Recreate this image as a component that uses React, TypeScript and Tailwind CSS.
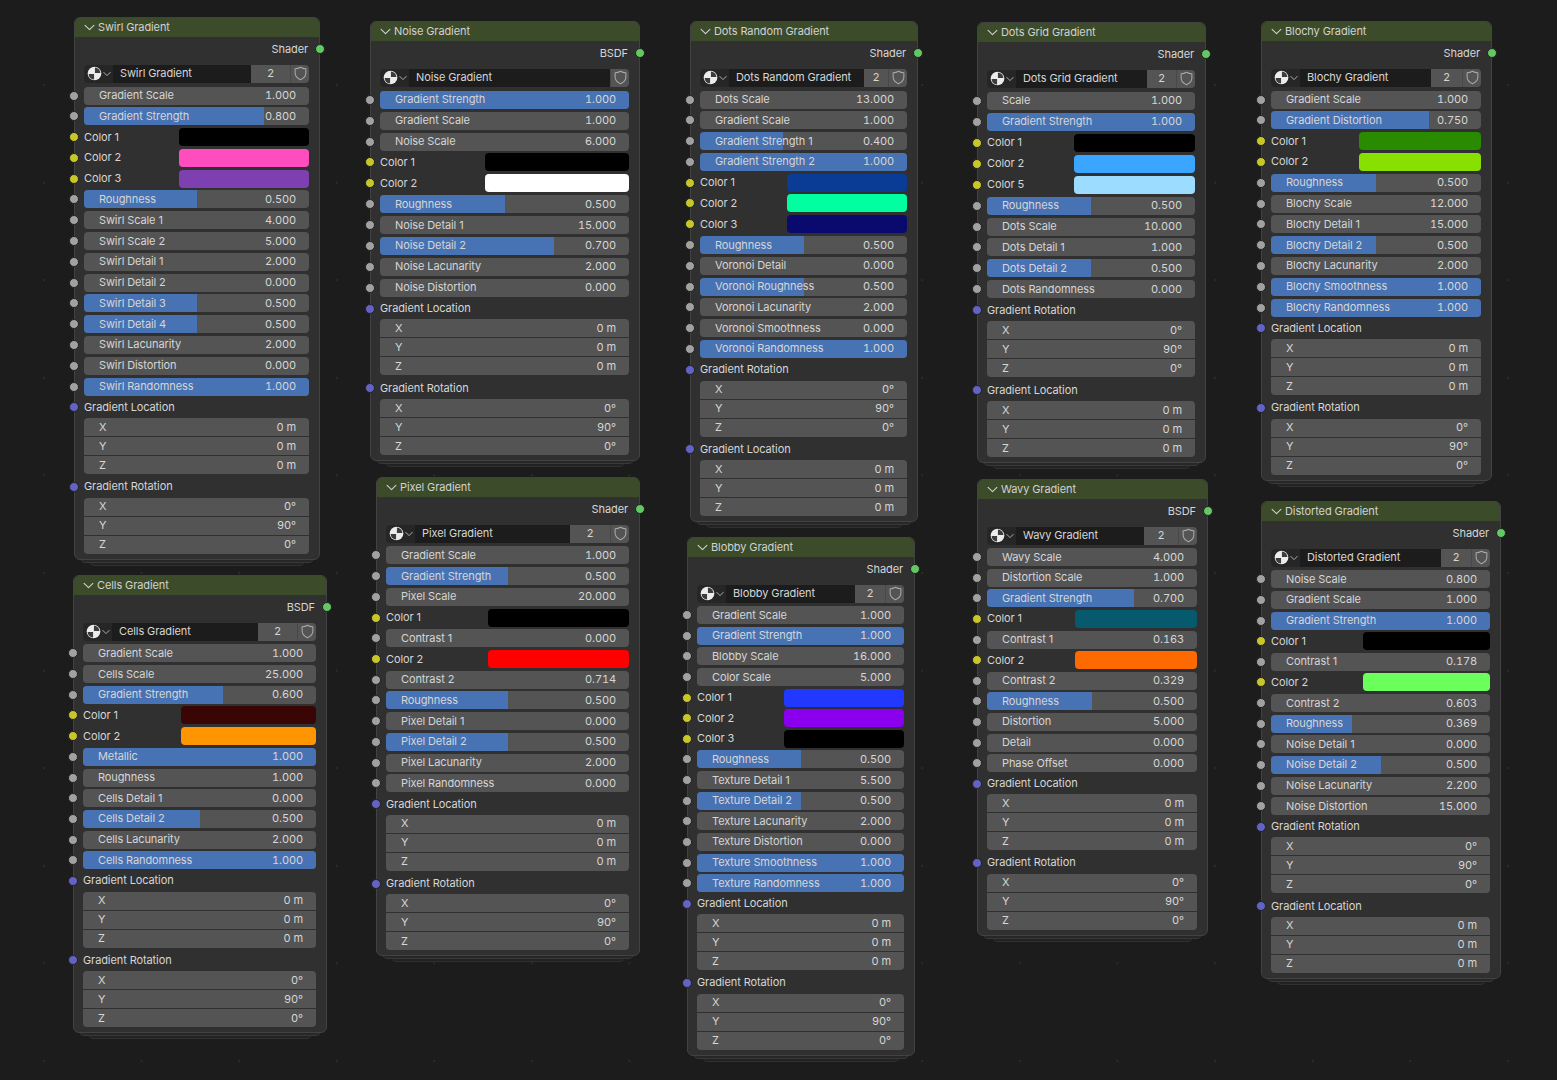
type Row = [string, string, number?] | [string, "color", string] | [string, "vec", string, string, string];

type NodeData = {
  title: string;
  output: string;
  x: number;
  y: number;
  w: number;
  pitch: number; // row to row distance differs a little per node
  numW?: number; // no width means no user count
  rows: Row[];
};

const LOC: Row = ["Gradient Location", "vec", "0 m", "0 m", "0 m"];
const ROT: Row = ["Gradient Rotation", "vec", "0°", "90°", "0°"];

const nodes: NodeData[] = [
  {
    title: "Swirl Gradient", output: "Shader", x: 74, y: 17, w: 246, pitch: 20.79, numW: 39,
    rows: [
      ["Gradient Scale", "1.000"],
      ["Gradient Strength", "0.800", 0.8],
      ["Color 1", "color", "#000000"],
      ["Color 2", "color", "#ff4dbd"],
      ["Color 3", "color", "#7e3fb0"],
      ["Roughness", "0.500", 0.5],
      ["Swirl Scale 1", "4.000"],
      ["Swirl Scale 2", "5.000"],
      ["Swirl Detail 1", "2.000"],
      ["Swirl Detail 2", "0.000"],
      ["Swirl Detail 3", "0.500", 0.5],
      ["Swirl Detail 4", "0.500", 0.5],
      ["Swirl Lacunarity", "2.000"],
      ["Swirl Distortion", "0.000"],
      ["Swirl Randomness", "1.000", 1],
      LOC, ROT,
    ],
  },
  {
    title: "Noise Gradient", output: "BSDF", x: 370, y: 21, w: 270, pitch: 20.89,
    rows: [
      ["Gradient Strength", "1.000", 1],
      ["Gradient Scale", "1.000"],
      ["Noise Scale", "6.000"],
      ["Color 1", "color", "#000000"],
      ["Color 2", "color", "#ffffff"],
      ["Roughness", "0.500", 0.5],
      ["Noise Detail 1", "15.000"],
      ["Noise Detail 2", "0.700", 0.7],
      ["Noise Lacunarity", "2.000"],
      ["Noise Distortion", "0.000"],
      LOC, ROT,
    ],
  },
  {
    title: "Dots Random Gradient", output: "Shader", x: 690, y: 21, w: 228, pitch: 20.79, numW: 24,
    rows: [
      ["Dots Scale", "13.000"],
      ["Gradient Scale", "1.000"],
      ["Gradient Strength 1", "0.400", 0.4],
      ["Gradient Strength 2", "1.000", 1],
      ["Color 1", "color", "#0a3c96"],
      ["Color 2", "color", "#00ffa0"],
      ["Color 3", "color", "#0a0a6e"],
      ["Roughness", "0.500", 0.5],
      ["Voronoi Detail", "0.000"],
      ["Voronoi Roughness", "0.500", 0.5],
      ["Voronoi Lacunarity", "2.000"],
      ["Voronoi Smoothness", "0.000"],
      ["Voronoi Randomness", "1.000", 1],
      ROT, LOC,
    ],
  },
  {
    title: "Dots Grid Gradient", output: "Shader", x: 977, y: 22, w: 229, pitch: 20.94, numW: 29,
    rows: [
      ["Scale", "1.000"],
      ["Gradient Strength", "1.000", 1],
      ["Color 1", "color", "#000000"],
      ["Color 2", "color", "#3aa6ff"],
      ["Color 5", "color", "#9bdcff"],
      ["Roughness", "0.500", 0.5],
      ["Dots Scale", "10.000"],
      ["Dots Detail 1", "1.000"],
      ["Dots Detail 2", "0.500", 0.5],
      ["Dots Randomness", "0.000"],
      ROT, LOC,
    ],
  },
  {
    title: "Blochy Gradient", output: "Shader", x: 1261, y: 21, w: 231, pitch: 20.8, numW: 31,
    rows: [
      ["Gradient Scale", "1.000"],
      ["Gradient Distortion", "0.750", 0.75],
      ["Color 1", "color", "#2a8a00"],
      ["Color 2", "color", "#88e000"],
      ["Roughness", "0.500", 0.5],
      ["Blochy Scale", "12.000"],
      ["Blochy Detail 1", "15.000"],
      ["Blochy Detail 2", "0.500", 0.5],
      ["Blochy Lacunarity", "2.000"],
      ["Blochy Smoothness", "1.000", 1],
      ["Blochy Randomness", "1.000", 1],
      LOC, ROT,
    ],
  },
  {
    title: "Cells Gradient", output: "BSDF", x: 73, y: 575, w: 254, pitch: 20.7, numW: 39,
    rows: [
      ["Gradient Scale", "1.000"],
      ["Cells Scale", "25.000"],
      ["Gradient Strength", "0.600", 0.6],
      ["Color 1", "color", "#3a0505"],
      ["Color 2", "color", "#ff9500"],
      ["Metallic", "1.000", 1],
      ["Roughness", "1.000"],
      ["Cells Detail 1", "0.000"],
      ["Cells Detail 2", "0.500", 0.5],
      ["Cells Lacunarity", "2.000"],
      ["Cells Randomness", "1.000", 1],
      LOC, ROT,
    ],
  },
  {
    title: "Pixel Gradient", output: "Shader", x: 376, y: 477, w: 264, pitch: 20.73, numW: 40,
    rows: [
      ["Gradient Scale", "1.000"],
      ["Gradient Strength", "0.500", 0.5],
      ["Pixel Scale", "20.000"],
      ["Color 1", "color", "#000000"],
      ["Contrast 1", "0.000"],
      ["Color 2", "color", "#ff0000"],
      ["Contrast 2", "0.714"],
      ["Roughness", "0.500", 0.5],
      ["Pixel Detail 1", "0.000"],
      ["Pixel Detail 2", "0.500", 0.5],
      ["Pixel Lacunarity", "2.000"],
      ["Pixel Randomness", "0.000"],
      LOC, ROT,
    ],
  },
  {
    title: "Blobby Gradient", output: "Shader", x: 687, y: 537, w: 228, pitch: 20.62, numW: 30,
    rows: [
      ["Gradient Scale", "1.000"],
      ["Gradient Strength", "1.000", 1],
      ["Blobby Scale", "16.000"],
      ["Color Scale", "5.000"],
      ["Color 1", "color", "#2238ff"],
      ["Color 2", "color", "#8a00ee"],
      ["Color 3", "color", "#000000"],
      ["Roughness", "0.500", 0.5],
      ["Texture Detail 1", "5.500"],
      ["Texture Detail 2", "0.500", 0.5],
      ["Texture Lacunarity", "2.000"],
      ["Texture Distortion", "0.000"],
      ["Texture Smoothness", "1.000", 1],
      ["Texture Randomness", "1.000", 1],
      LOC, ROT,
    ],
  },
  {
    title: "Wavy Gradient", output: "BSDF", x: 977, y: 479, w: 231, pitch: 20.6, numW: 34,
    rows: [
      ["Wavy Scale", "4.000"],
      ["Distortion Scale", "1.000"],
      ["Gradient Strength", "0.700", 0.7],
      ["Color 1", "color", "#075a6e"],
      ["Contrast 1", "0.163"],
      ["Color 2", "color", "#ff6a00"],
      ["Contrast 2", "0.329"],
      ["Roughness", "0.500", 0.5],
      ["Distortion", "5.000"],
      ["Detail", "0.000"],
      ["Phase Offset", "0.000"],
      LOC, ROT,
    ],
  },
  {
    title: "Distorted Gradient", output: "Shader", x: 1261, y: 501, w: 240, pitch: 20.64, numW: 30,
    rows: [
      ["Noise Scale", "0.800"],
      ["Gradient Scale", "1.000"],
      ["Gradient Strength", "1.000", 1],
      ["Color 1", "color", "#000000"],
      ["Contrast 1", "0.178"],
      ["Color 2", "color", "#6aff5a"],
      ["Contrast 2", "0.603"],
      ["Roughness", "0.369", 0.369],
      ["Noise Detail 1", "0.000"],
      ["Noise Detail 2", "0.500", 0.5],
      ["Noise Lacunarity", "2.200"],
      ["Noise Distortion", "15.000"],
      ROT, LOC,
    ],
  },
];

const Socket = ({ color, side = "left" }: { color: string; side?: "left" | "right" }) => (
  <span
    className={`absolute top-1/2 size-[10px] -translate-y-1/2 rounded-full border border-[#222222] ${
      side === "left" ? "left-[-15px]" : "right-[-16px]"
    }`}
    style={{ backgroundColor: color }}
  />
);

const MaterialIcon = () => (
  <svg width="15" height="15" viewBox="0 0 14 14">
    <circle cx="7" cy="7" r="6.4" fill="#ececec" />
    <path d="M7.4 1.4A5.3 5.3 0 0 1 12.5 6.6H7.4Z" fill="#3c3c3c" />
    <path d="M6.6 12.6A5.6 5.6 0 0 1 1.5 7.4H6.6Z" fill="#3c3c3c" />
  </svg>
);

const Chevron = ({ size = 10, color = "#d0d0d0" }: { size?: number; color?: string }) => (
  <svg width={size} height={size} viewBox="0 0 10 10" fill="none">
    <path d="M1 3l4 4 4-4" stroke={color} strokeWidth="1" strokeLinecap="round" strokeLinejoin="round" />
  </svg>
);

const Shield = () => (
  <svg width="15" height="15" viewBox="0 0 14 14" fill="none">
    <path
      d="M7 1.2c1.6 1 3.4 1.4 5 1.4v4c0 3-2.2 5-5 6.2-2.8-1.2-5-3.2-5-6.2v-4c1.6 0 3.4-.4 5-1.4Z"
      stroke="#a8a8a8"
      strokeWidth="1"
      strokeLinejoin="round"
    />
  </svg>
);

const Slider = ({ label, value, fill }: { label: string; value: string; fill?: number }) => (
  <div className="relative h-[18px]">
    <Socket color="#a1a1a1" />
    <div className="relative flex h-full items-center justify-between overflow-hidden rounded-[4px] bg-[#545454] pr-[13px] pl-[15px]">
      {fill !== undefined && (
        <div className="absolute inset-y-0 left-0 bg-[#4772b3]" style={{ width: `${fill * 100}%` }} />
      )}
      <span className="relative">{label}</span>
      <span className="relative tabular-nums">{value}</span>
    </div>
  </div>
);

const ColorRow = ({ label, color }: { label: string; color: string }) => (
  <div className="relative flex h-[18px] items-center">
    <Socket color="#c7c729" />
    <span className="w-[42%]">{label}</span>
    <div className="h-full flex-1 rounded-[4px]" style={{ backgroundColor: color }} />
  </div>
);

const VectorGroup = ({ label, values }: { label: string; values: string[] }) => (
  <>
    <div className="relative flex h-[18px] items-center">
      <Socket color="#6363c7" />
      <span>{label}</span>
    </div>
    <div className="-mt-[1px] mb-[1px] flex flex-col gap-[1px] overflow-hidden rounded-[4px]">
      {values.map((v, i) => (
        <div key={i} className="flex h-[18px] items-center justify-between bg-[#545454] pr-[13px] pl-[15px]">
          <span>{"XYZ"[i]}</span>
          <span className="tabular-nums">{v}</span>
        </div>
      ))}
    </div>
  </>
);

const GroupNode = ({ node }: { node: NodeData }) => (
  <div className="absolute" style={{ left: node.x, top: node.y, width: node.w }}>
    <div className="absolute right-[16px] -bottom-[6px] left-[16px] h-[12px] rounded-b-[4px] border border-[#303030] bg-[#222222]" />
    <div className="absolute right-[6px] -bottom-[3px] left-[6px] h-[12px] rounded-b-[5px] border border-[#383838] bg-[#272727]" />
    <div className="relative rounded-[6px] border border-[#424242] bg-[#303030] text-[11px] leading-none tracking-[-0.1px] text-[#d6d6d6]">
      <div className="flex h-[19px] items-center gap-[3px] rounded-t-[5px] bg-[#3c4b2a] pl-[9px] text-[#d2d2d2]">
        <Chevron size={11} />
        <span>{node.title}</span>
      </div>
      <div
        className="flex flex-col pt-[3px] pr-[10px] pb-[4px] pl-[9px]"
        style={{ rowGap: node.pitch - 18 }}
      >
        <div className="relative flex h-[18px] items-center justify-end pr-[1px]">
          <span>{node.output}</span>
          <Socket color="#63c763" side="right" />
        </div>
        <div className="mt-[4px] mb-[1px] flex h-[18px] overflow-hidden rounded-[4px]">
          <div className="flex w-[29px] items-center justify-center gap-[1px] bg-[#262626]">
            <MaterialIcon />
            <Chevron size={8} />
          </div>
          <div className="flex min-w-0 flex-1 items-center bg-[#1c1c1c] pl-[7px] whitespace-nowrap">{node.title}</div>
          {node.numW && (
            <div className="flex items-center justify-center bg-[#545454]" style={{ width: node.numW }}>
              2
            </div>
          )}
          <div className="flex w-[19px] items-center justify-center border-l border-[#484848] bg-[#545454]">
            <Shield />
          </div>
        </div>
        {node.rows.map((row) => {
          if (row[1] === "vec") {
            const r = row as [string, "vec", string, string, string];
            return <VectorGroup key={r[0]} label={r[0]} values={[r[2], r[3], r[4]]} />;
          }
          if (row[1] === "color") {
            return <ColorRow key={row[0]} label={row[0]} color={row[2] as string} />;
          }
          return <Slider key={row[0]} label={row[0]} value={row[1]} fill={row[2] as number | undefined} />;
        })}
      </div>
    </div>
  </div>
);

export default function App() {
  return (
    <div className="relative h-[1080px] w-[1557px] overflow-hidden bg-[#1c1c1c] bg-[radial-gradient(circle,#2b2b2b_1px,transparent_1.5px)] bg-size-[97.6px_97.6px] bg-position-[-4.9px_36.2px] font-['Inter',sans-serif]">
      {nodes.map((node) => (
        <GroupNode key={node.title} node={node} />
      ))}
    </div>
  );
}
